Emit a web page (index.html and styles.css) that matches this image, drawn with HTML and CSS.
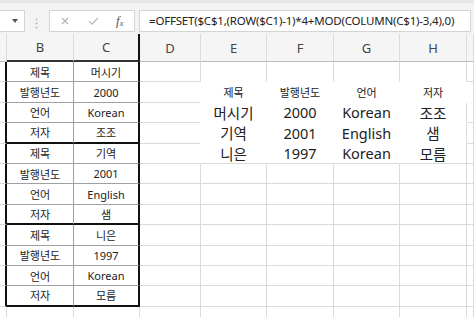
FILE: index.html
```html
<!DOCTYPE html>
<html>
<head>
  <meta charset="utf-8">
  <title>OFFSET</title>
  <link rel="stylesheet" href="styles.css">
</head>
<body>
  <div class="toolbar">
    <div class="namebox">
      <svg class="drop" width="6" height="4" viewBox="0 0 6 4"><path d="M0 0h6L3 4z" fill="#555"/></svg>
    </div>
    <svg class="grip" width="3" height="11" viewBox="0 0 3 11">
      <circle cx="1.5" cy="1.5" r="0.9" fill="#b5b5b5"/>
      <circle cx="1.5" cy="5.5" r="0.9" fill="#b5b5b5"/>
      <circle cx="1.5" cy="9.5" r="0.9" fill="#b5b5b5"/>
    </svg>
    <div class="fxbox">
      <svg class="cancel" width="8" height="8" viewBox="0 0 8 8"><path d="M1 1l6 6M7 1l-6 6" stroke="#b3b3b3" stroke-width="1.1" fill="none"/></svg>
      <svg class="enter" width="11" height="8" viewBox="0 0 11 8"><path d="M1 4.2l3 3L10 1" stroke="#b3b3b3" stroke-width="1.1" fill="none"/></svg>
      <span class="fx">f<sub>x</sub></span>
    </div>
    <div class="formula">=OFFSET($C$1,(ROW($C1)-1)*4+MOD(COLUMN(C$1)-3,4),0)</div>
  </div>

  <div class="sheet">
    <!-- column headers -->
    <div class="c hd"></div><div class="c hd bt">B</div><div class="c hd bt br">C</div><div class="c hd">D</div><div class="c hd">E</div><div class="c hd">F</div><div class="c hd">G</div><div class="c hd">H</div><div class="c hd"></div>

    <!-- row 1 -->
    <div class="c ed"></div><div class="c bk">제목</div><div class="c bk br">머시기</div><div class="c"></div><div class="c hw"></div><div class="c hw"></div><div class="c hw"></div><div class="c hw"></div><div class="c"></div>
    <!-- row 2 -->
    <div class="c ed"></div><div class="c bk">발행년도</div><div class="c bk br">2000</div><div class="c vw"></div><div class="c w">제목</div><div class="c w">발행년도</div><div class="c w">언어</div><div class="c w">저자</div><div class="c hw"></div>
    <!-- row 3 -->
    <div class="c ed"></div><div class="c bk">언어</div><div class="c bk br">Korean</div><div class="c vw"></div><div class="c w big">머시기</div><div class="c w big">2000</div><div class="c w big">Korean</div><div class="c hw big">조조</div><div class="c"></div>
    <!-- row 4 -->
    <div class="c ed"></div><div class="c bk end">저자</div><div class="c bk br end">조조</div><div class="c vw"></div><div class="c w big">기역</div><div class="c w big">2001</div><div class="c w big">English</div><div class="c hw big">샘</div><div class="c"></div>
    <!-- row 5 -->
    <div class="c ed"></div><div class="c bk">제목</div><div class="c bk br">기역</div><div class="c vw"></div><div class="c vw big">니은</div><div class="c vw big">1997</div><div class="c vw big">Korean</div><div class="c big">모름</div><div class="c"></div>
    <!-- row 6 -->
    <div class="c ed"></div><div class="c bk">발행년도</div><div class="c bk br">2001</div><div class="c"></div><div class="c"></div><div class="c"></div><div class="c"></div><div class="c"></div><div class="c"></div>
    <!-- row 7 -->
    <div class="c ed"></div><div class="c bk">언어</div><div class="c bk br">English</div><div class="c"></div><div class="c"></div><div class="c"></div><div class="c"></div><div class="c"></div><div class="c"></div>
    <!-- row 8 -->
    <div class="c ed"></div><div class="c bk end">저자</div><div class="c bk br end">샘</div><div class="c"></div><div class="c"></div><div class="c"></div><div class="c"></div><div class="c"></div><div class="c"></div>
    <!-- row 9 -->
    <div class="c ed"></div><div class="c bk">제목</div><div class="c bk br">니은</div><div class="c"></div><div class="c"></div><div class="c"></div><div class="c"></div><div class="c"></div><div class="c"></div>
    <!-- row 10 -->
    <div class="c ed"></div><div class="c bk">발행년도</div><div class="c bk br">1997</div><div class="c"></div><div class="c"></div><div class="c"></div><div class="c"></div><div class="c"></div><div class="c"></div>
    <!-- row 11 -->
    <div class="c ed"></div><div class="c bk">언어</div><div class="c bk br">Korean</div><div class="c"></div><div class="c"></div><div class="c"></div><div class="c"></div><div class="c"></div><div class="c"></div>
    <!-- row 12 -->
    <div class="c ed"></div><div class="c bk end">저자</div><div class="c bk br end">모름</div><div class="c"></div><div class="c"></div><div class="c"></div><div class="c"></div><div class="c"></div><div class="c"></div>
    <!-- row 13 -->
    <div class="c"></div><div class="c"></div><div class="c"></div><div class="c"></div><div class="c"></div><div class="c"></div><div class="c"></div><div class="c"></div><div class="c"></div>
  </div>
</body>
</html>
```

FILE: styles.css
```css
body {
  margin: 0;
  width: 474px;
  height: 317px;
  overflow: hidden;
  background: #fff;
  font-family: 'Noto Sans', 'Noto Sans CJK KR', sans-serif;
  color: #222;
}

/* formula bar */

.toolbar {
  display: flex;
  align-items: flex-start;
  height: 31px;
  border-top: 3px solid #e6e6e6;
  background: #f3f3f3;
}

.namebox {
  display: flex;
  align-items: center;
  justify-content: flex-end;
  width: 25px;
  height: 22px;
  margin-top: 7px;
  padding-right: 6px;
  box-sizing: border-box;
  background: #fff;
  border: 1px solid #d4d4d4;
  border-left: none;
}

.grip {
  margin: 15px 0 0 10px;
}

.fxbox {
  display: flex;
  align-items: center;
  width: 86px;
  height: 22px;
  margin: 7px 0 0 11px;
  box-sizing: border-box;
  background: #fff;
  border: 1px solid #d4d4d4;
}

.cancel {
  margin-left: 11px;
}

.enter {
  margin-left: 19px;
}

.fx {
  margin-left: 17px;
  font-family: 'Liberation Serif', serif;
  font-style: italic;
  font-size: 13px;
  color: #555;
}

.fx sub {
  font-size: 8px;
  vertical-align: -1px;
}

.formula {
  flex: 1;
  height: 22px;
  margin: 7px 3px 0 4px;
  padding-left: 9px;
  box-sizing: border-box;
  background: #fff;
  border: 1px solid #d4d4d4;
  font-size: 11.5px;
  letter-spacing: -0.2px;
  line-height: 20px;
  color: #222;
  white-space: nowrap;
  overflow: hidden;
}

/* grid */

.sheet {
  display: grid;
  grid-template-columns: 7px 67px 66px 61px 66px 67px 66px 67px 1fr;
  grid-template-rows: 28px repeat(13, 20.4px);
}

.c {
  display: flex;
  align-items: center;
  justify-content: center;
  box-sizing: border-box;
  border-right: 1px solid #dadada;
  border-bottom: 1px solid #dadada;
  font-size: 11px;
  white-space: nowrap;
}

.hd {
  background: #f5f5f5;
  border-right-color: #dcdcdc;
  border-bottom-color: #bdbdbd;
  font-size: 13px;
  color: #444;
}

.hd.bt {
  border-bottom: 2px solid #333;
}

.bk {
  border-right-color: #a0a0a0;
  border-bottom-color: #a0a0a0;
}

.ed {
  border-right: 2px solid #111;
}

.br {
  border-right: 2px solid #111;
}

.end {
  border-bottom: 2px solid #111;
}

/* white filled block E2:H5 hides its gridlines */
.w {
  border-color: #fff;
}

.hw {
  border-bottom-color: #fff;
}

.vw {
  border-right-color: #fff;
}

.big {
  font-size: 14.5px;
}
```
